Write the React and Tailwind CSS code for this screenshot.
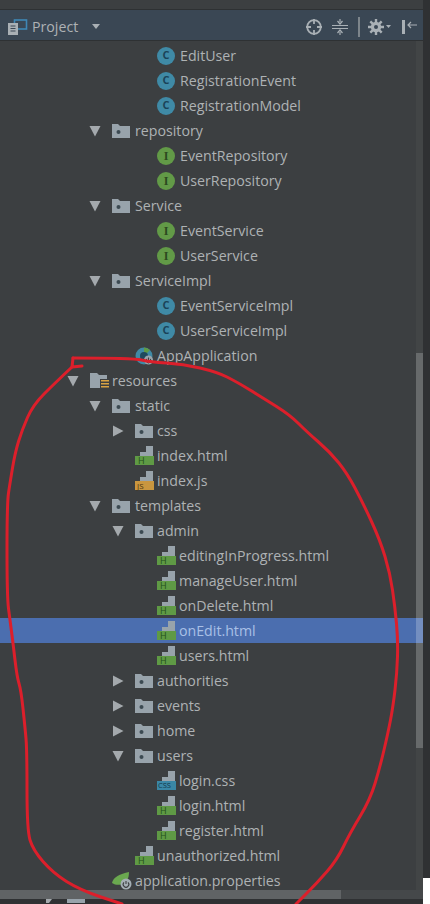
import React from "react";

const Chevron = ({ open }) => (
  <svg width="14" height="14" viewBox="0 0 14 14" className="shrink-0">
    {open ? <path d="M1.5 2h11L7 12.5z" fill="#a4a9ad" /> : <path d="M2 1.5l10.5 5.5L2 12.5z" fill="#a4a9ad" />}
  </svg>
);

const Folder = ({ res }) => (
  <svg width={res ? 20 : 18} height="15" viewBox={res ? "0 0 20 15" : "0 0 18 15"} className="shrink-0">
    {res ? (
      <g>
        <path d="M0 0h7l2 2h8v13H0z" fill="#98a3ab" />
        <rect x="10" y="6" width="10" height="9" fill="#3c3f41" />
        <path d="M11 7h8v1.6h-8zM11 10h8v1.6h-8zM11 13h8v1.6h-8z" fill="#d9a343" />
      </g>
    ) : (
      <g>
        <path d="M0 1h6l2 2h10v12H0z" fill="#98a3ab" />
        <circle cx="6.5" cy="9" r="2" fill="#3c4a52" />
      </g>
    )}
  </svg>
);

const ClassIcon = ({ kind }) => (
  <div
    className={
      kind === "I"
        ? "flex size-[18px] shrink-0 items-center justify-center rounded-full bg-[#629a47] font-['Liberation_Serif',serif] text-[12px] font-bold text-[#2c4a20]"
        : "flex size-[18px] shrink-0 items-center justify-center rounded-full bg-[#3f8aa6] text-[11px] font-bold text-[#1b4358]"
    }
  >
    {kind}
  </div>
);

const FileIcon = ({ kind }) => {
  const bar =
    kind === "H"
      ? "bg-[#5f9a45] text-[#24501a] text-[9px] pl-[3px]"
      : kind === "JS"
        ? "bg-[#c9963f] text-[#4d3410] text-[8px] pl-[2px]"
        : "bg-[#3a87a6] text-[#123a4c] text-[7.5px] pl-[1px]";
  return (
    <div className="flex h-[19px] w-[19px] shrink-0 flex-col items-end">
      <svg width="13" height="10" viewBox="0 0 13 10" className="mr-[1px] shrink-0">
        <path d="M6 0h7v10H0V6h6z" fill="#98a3ab" />
      </svg>
      <div className={`flex h-[9px] w-[19px] items-center leading-none font-medium ${bar}`}>{kind}</div>
    </div>
  );
};

const AppIcon = () => (
  <svg width="19" height="20" viewBox="0 0 19 20" className="shrink-0">
    <circle cx="9" cy="10" r="8.5" fill="#3f8aa6" />
    <path d="M9 1.5a8.5 8.5 0 0 1 6 2.5L9 10z" fill="#5f9a45" />
    <circle cx="9" cy="10" r="4" fill="#1f4a5e" />
    <circle cx="13.5" cy="14" r="4.5" fill="#9aa4ab" />
    <path d="M13.5 11.5v3M11.8 12.8a2.4 2.4 0 1 0 3.4 0" stroke="#3c3f41" strokeWidth="1" fill="none" />
  </svg>
);

const SpringIcon = () => (
  <svg width="20" height="18" viewBox="0 0 20 18" className="shrink-0">
    <path d="M0 11C1 5 8 2 17 0c0 6-2 11-8 12.5-3 .6-6 .5-9-1.500z" fill="#6aa84f" />
    <circle cx="14" cy="12" r="5.500" fill="#a4aeb4" />
    <path d="M14 9v3M12 10.400a2.800 2.800 0 1 0 4 0" stroke="#3c3f41" strokeWidth="1.100" fill="none" />
  </svg>
);

const rows = [
  { t: "EditUser", i: "C", p: "pl-[157px]" },
  { t: "RegistrationEvent", i: "C", p: "pl-[157px]" },
  { t: "RegistrationModel", i: "C", p: "pl-[157px]" },
  { t: "repository", i: "F", o: true, p: "pl-[112px]" },
  { t: "EventRepository", i: "I", p: "pl-[157px]" },
  { t: "UserRepository", i: "I", p: "pl-[157px]" },
  { t: "Service", i: "F", o: true, p: "pl-[112px]" },
  { t: "EventService", i: "I", p: "pl-[157px]" },
  { t: "UserService", i: "I", p: "pl-[157px]" },
  { t: "ServiceImpl", i: "F", o: true, p: "pl-[112px]" },
  { t: "EventServiceImpl", i: "C", p: "pl-[157px]" },
  { t: "UserServiceImpl", i: "C", p: "pl-[157px]" },
  { t: "AppApplication", i: "A", p: "pl-[135px]" },
  { t: "resources", i: "R", o: true, p: "pl-[90px]" },
  { t: "static", i: "F", o: true, p: "pl-[112px]" },
  { t: "css", i: "D", o: false, p: "pl-[135px]" },
  { t: "index.html", i: "H", p: "pl-[135px]" },
  { t: "index.js", i: "JS", p: "pl-[135px]" },
  { t: "templates", i: "F", o: true, p: "pl-[112px]" },
  { t: "admin", i: "D", o: true, p: "pl-[135px]" },
  { t: "editingInProgress.html", i: "H", p: "pl-[157px]" },
  { t: "manageUser.html", i: "H", p: "pl-[157px]" },
  { t: "onDelete.html", i: "H", p: "pl-[157px]" },
  { t: "onEdit.html", i: "H", p: "pl-[157px]", sel: true },
  { t: "users.html", i: "H", p: "pl-[157px]" },
  { t: "authorities", i: "D", o: false, p: "pl-[135px]" },
  { t: "events", i: "D", o: false, p: "pl-[135px]" },
  { t: "home", i: "D", o: false, p: "pl-[135px]" },
  { t: "users", i: "D", o: true, p: "pl-[135px]" },
  { t: "login.css", i: "CSS", p: "pl-[157px]" },
  { t: "login.html", i: "H", p: "pl-[157px]" },
  { t: "register.html", i: "H", p: "pl-[157px]" },
  { t: "unauthorized.html", i: "H", p: "pl-[135px]" },
  { t: "application.properties", i: "S", p: "pl-[112px]" },
];

const gap = { F: "ml-[5px]", D: "ml-[4px]", R: "ml-[2px]", C: "ml-[5px]", I: "ml-[5px]", H: "ml-[3px]", JS: "ml-[3px]", CSS: "ml-[3px]", A: "ml-[3px]", S: "ml-[3px]" };

const Row = ({ r }) => {
  const hasChevron = r.o !== undefined;
  return (
    <div className={`flex h-[25px] items-center ${r.p} ${r.sel ? "bg-[#4b6eaf]" : ""}`}>
      {hasChevron && (
        <div className="-ml-[24px] mr-[10px] flex w-[14px] justify-center">
          <Chevron open={r.o} />
        </div>
      )}
      {(r.i === "F" || r.i === "D" || r.i === "R") && <Folder res={r.i === "R"} />}
      {(r.i === "C" || r.i === "I") && <ClassIcon kind={r.i} />}
      {(r.i === "H" || r.i === "JS" || r.i === "CSS") && <FileIcon kind={r.i} />}
      {r.i === "A" && <AppIcon />}
      {r.i === "S" && <SpringIcon />}
      <span className={`${gap[r.i]} whitespace-nowrap text-[14.2px] ${r.sel ? "text-[#a9c0e6]" : "text-[#aeb2b4]"}`}>{r.t}</span>
    </div>
  );
};

const smooth = (pts) => {
  let d = `M${pts[0][0]} ${pts[0][1]}`;
  for (let i = 1; i < pts.length - 1; i++) {
    const mx = (pts[i][0] + pts[i + 1][0]) / 2;
    const my = (pts[i][1] + pts[i + 1][1]) / 2;
    d += `Q${pts[i][0]} ${pts[i][1]} ${mx} ${my}`;
  }
  const last = pts[pts.length - 1];
  return `${d}L${last[0]} ${last[1]}`;
};

const rightInk = smooth([
  [73, 358], [133, 358], [150, 362], [183, 364], [217, 372], [237, 382], [263, 398], [290, 415], [307, 432], [330, 452], [347, 473],
  [363, 503], [380, 540], [390, 573], [395, 607], [398, 640], [397, 673], [393, 707], [388, 733], [380, 767], [370, 800], [350, 833],
  [337, 860], [317, 883], [296, 904],
]);
const leftInk = smooth([
  [72, 367], [55, 383], [33, 405], [22, 430], [15, 453], [10, 483], [7, 503], [7, 597], [10, 620], [13, 643], [17, 677], [21, 690],
  [25, 727], [27, 750], [27, 830], [33, 850], [53, 873], [80, 890], [122, 904],
]);

export default function App() {
  return (
    <div className="relative h-[904px] w-[430px] overflow-hidden bg-[#2f3133] font-['Open_Sans','Noto_Sans',sans-serif]">
      <div className="w-[423px] bg-[#3c3f41]">
        <div className="h-[10px] border-b border-[#2e3133]" />
        <div className="flex h-[31px] items-center border-b border-[#2e3133] bg-[#3a4754] pl-[8px] pr-[5px] pt-[3px]">
          <svg width="20" height="16" viewBox="0 0 20 16" className="shrink-0">
            <rect x="6.500" y="1" width="12" height="9" fill="none" stroke="#3f87b5" strokeWidth="1.600" />
            <rect x="0" y="4" width="10" height="12" fill="#a9b0b5" />
            <path d="M2.500 7h5M2.500 9.500h5M2.500 12h5" stroke="#3a4754" strokeWidth="1" />
          </svg>
          <span className="ml-[4px] text-[14.2px] text-[#aeb2b4]">Project</span>
          <svg width="8" height="5" viewBox="0 0 8 5" className="ml-[14px] shrink-0">
            <path d="M0 0h8L4 5z" fill="#a9b0b5" />
          </svg>
          <div className="ml-auto flex items-center">
            <svg width="18" height="18" viewBox="0 0 18 18" className="shrink-0">
              <circle cx="9" cy="9" r="6.800" fill="none" stroke="#a9b0b5" strokeWidth="1.800" />
              <path d="M9 1v5M9 12v5M1 9h5M12 9h5" stroke="#a9b0b5" strokeWidth="1.800" />
            </svg>
            <svg width="16" height="18" viewBox="0 0 16 18" className="ml-[9px] shrink-0">
              <path d="M0 7.500h16M0 10.500h16" stroke="#a9b0b5" strokeWidth="1" />
              <path d="M8 1v3M5.500 3L8 6l2.500-3M8 17v-3M5.500 15L8 12l2.500 3" stroke="#a9b0b5" strokeWidth="1.200" fill="none" />
            </svg>
            <div className="ml-[10px] h-[20px] w-[2px] bg-[#7d858b]" />
            <svg width="16" height="16" viewBox="0 0 16 16" className="ml-[8px] shrink-0">
              <circle cx="8" cy="8" r="5.200" fill="#a9b0b5" />
              <path d="M8 0v16M0 8h16M2.300 2.300l11.400 11.400M13.700 2.300L2.300 13.700" stroke="#a9b0b5" strokeWidth="2.400" />
              <circle cx="8" cy="8" r="2" fill="#3a4754" />
            </svg>
            <svg width="5" height="3" viewBox="0 0 5 3" className="ml-[2px] shrink-0">
              <path d="M0 0h5L2.500 3z" fill="#a9b0b5" />
            </svg>
            <svg width="16" height="16" viewBox="0 0 16 16" className="ml-[11px] shrink-0">
              <rect x="0" y="1" width="3" height="14" fill="#a9b0b5" />
              <path d="M15 6H6M9 3L6 6l3 3" stroke="#a9b0b5" strokeWidth="1.200" fill="none" />
            </svg>
          </div>
        </div>
        <div className="relative h-[849px] overflow-hidden pt-[2px]">
          {rows.map((r) => (
            <Row key={r.t} r={r} />
          ))}
          <div className="absolute right-0 top-0 h-full w-[7px] bg-white/[0.03]">
            <div className="mt-[312px] h-[395px] w-full bg-white/20" />
          </div>
        </div>
        <div className="h-[9px] bg-[#45484a]">
          <div className="h-full w-[341px] bg-[#606365]" />
        </div>
      </div>
      <div className="h-[4px] w-[423px] bg-[#2f3133]">
        <svg width="100" height="4" viewBox="0 0 100 4" className="block">
          <path d="M46 0h6l-3 4h-3z" fill="#a4a9ad" />
          <path d="M67 0h18v4H67z" fill="#98a3ab" />
        </svg>
      </div>
      <div className="absolute bottom-0 right-0 h-[26px] w-[7px] bg-white" />
      <svg width="430" height="904" viewBox="0 0 430 904" fill="none" className="pointer-events-none absolute left-0 top-0">
        <path d="M82 366L72 367L73 358" stroke="#dc1f2b" strokeWidth="3" strokeLinecap="round" strokeLinejoin="round" />
        <path d={rightInk} stroke="#dc1f2b" strokeWidth="3" strokeLinecap="round" strokeLinejoin="round" />
        <path d={leftInk} stroke="#dc1f2b" strokeWidth="3" strokeLinecap="round" strokeLinejoin="round" />
      </svg>
    </div>
  );
}
